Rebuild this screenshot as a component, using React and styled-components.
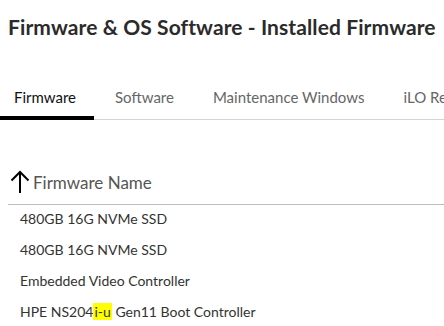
import styled, { createGlobalStyle } from "styled-components";

const GlobalStyle = createGlobalStyle`
  html, body {
    margin: 0;
    padding: 0;
    background: #fff;
    overflow: hidden;
  }
  body {
    font-family: Lato, "Noto Sans", "Liberation Sans", sans-serif;
    color: #333;
  }
`;

const Page = styled.div`
  width: 444px;
  height: 326px;
  overflow: hidden;
`;

const Title = styled.h1`
  margin: 0;
  padding: 15px 0 0 8px;
  font-size: 21px;
  line-height: 24px;
  letter-spacing: 0.1px;
  font-weight: 700;
  color: #2b2b2b;
  white-space: nowrap;
`;

const TabList = styled.div`
  display: flex;
  gap: 7px;
  margin-top: 48px;
  border-bottom: 1px solid #d4d4d4;
  white-space: nowrap;
`;

const Tab = styled.div`
  padding: 0 18px 0 14px;
  font-size: 15px;
  line-height: 20px;
  height: 29px;
  color: ${(p) => (p.$active ? "#111" : "#666")};
  border-bottom: 4px solid ${(p) => (p.$active ? "#000" : "transparent")};
  margin-bottom: -1px;
  &:first-child {
    width: 62px;
  }
`;

const Table = styled.div`
  margin-top: 47px;
  margin-left: 8px;
`;

const HeaderRow = styled.div`
  display: flex;
  align-items: center;
  gap: 3px;
  padding-left: 2px;
  height: 30px;
  padding-bottom: 7px;
  border-bottom: 1px solid #bdbdbd;
`;

const HeaderText = styled.span`
  font-size: 17px;
  color: #555;
`;

const Row = styled.div`
  padding-left: 12px;
  height: 27px;
  padding-bottom: 4px;
  line-height: 27px;
  font-size: 14px;
  color: #333;
  white-space: nowrap;
`;

const Mark = styled.mark`
  background: #ffff00;
  color: inherit;
  padding: 0 1px;
`;

const SortArrow = () => (
  <svg width="20" height="24" viewBox="0 0 20 24" fill="none" stroke="#000" strokeWidth="2">
    <path d="M10 2V23" />
    <path d="M1.5 10.5L10 2L18.5 10.5" />
  </svg>
);

const tabs = ["Firmware", "Software", "Maintenance Windows", "iLO Repository"];

export default function App() {
  return (
    <Page>
      <GlobalStyle />
      <Title>Firmware &amp; OS Software - Installed Firmware</Title>
      <TabList>
        {tabs.map((t, i) => (
          <Tab key={t} $active={i === 0}>{t}</Tab>
        ))}
      </TabList>
      <Table>
        <HeaderRow>
          <SortArrow />
          <HeaderText>Firmware Name</HeaderText>
        </HeaderRow>
        <Row>480GB 16G NVMe SSD</Row>
        <Row>480GB 16G NVMe SSD</Row>
        <Row>Embedded Video Controller</Row>
        <Row>
          HPE NS204<Mark>i-u</Mark> Gen11 Boot Controller
        </Row>
      </Table>
    </Page>
  );
}
